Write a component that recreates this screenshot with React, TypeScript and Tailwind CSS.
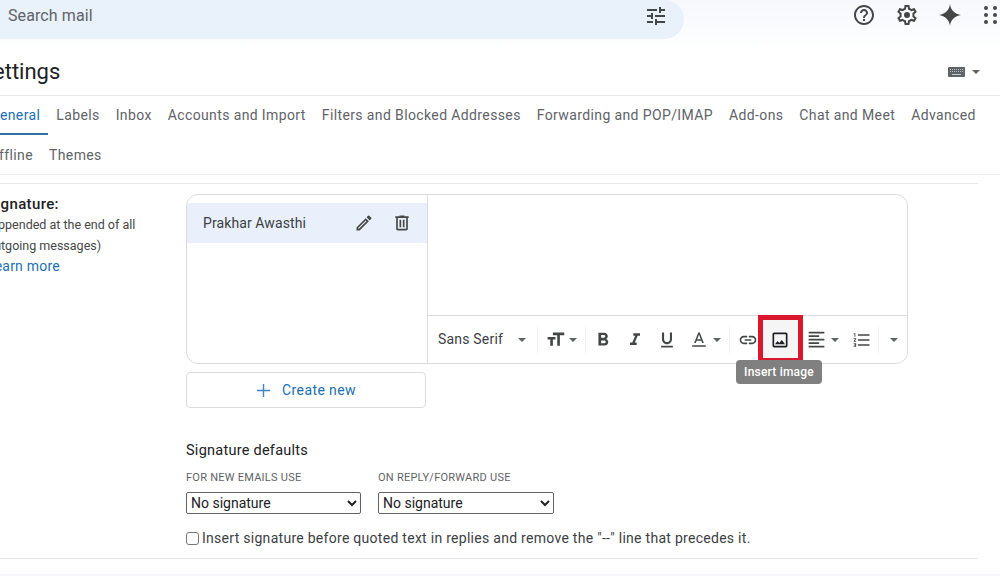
import React from "react";

const Icon = ({ d, size = 24, className = "" }: { d: string; size?: number; className?: string }) => (
  <svg viewBox="0 0 24 24" width={size} height={size} fill="currentColor" className={`shrink-0 ${className}`}>
    <path d={d} />
  </svg>
);

const paths = {
  tune: "M3 17v2h6v-2H3zM3 5v2h10V5H3zm10 16v-2h8v-2h-8v-2h-2v6h2zM7 9v2H3v2h4v2h2V9H7zm14 4v-2H11v2h10zm-6-4h2V7h4V5h-4V3h-2v6z",
  help: "M11 18h2v-2h-2v2zm1-16C6.48 2 2 6.48 2 12s4.48 10 10 10 10-4.48 10-10S17.52 2 12 2zm0 18c-4.41 0-8-3.59-8-8s3.59-8 8-8 8 3.59 8 8-3.59 8-8 8zm0-14c-2.21 0-4 1.79-4 4h2c0-1.1.9-2 2-2s2 .9 2 2c0 2-3 1.75-3 5h2c0-2.25 3-2.5 3-5 0-2.21-1.79-4-4-4z",
  settings:
    "M19.43 12.98c.04-.32.07-.64.07-.98 0-.34-.03-.66-.07-.98l2.11-1.65c.19-.15.24-.42.12-.64l-2-3.46c-.09-.16-.26-.25-.44-.25-.06 0-.12.01-.17.03l-2.49 1c-.52-.4-1.08-.73-1.69-.98l-.38-2.65C14.46 2.18 14.25 2 14 2h-4c-.25 0-.46.18-.49.42l-.38 2.65c-.61.25-1.17.59-1.69.98l-2.49-1c-.06-.02-.12-.03-.18-.03-.17 0-.34.09-.43.25l-2 3.46c-.13.22-.07.49.12.64l2.11 1.65c-.04.32-.07.65-.07.98 0 .33.03.66.07.98l-2.11 1.65c-.19.15-.24.42-.12.64l2 3.46c.09.16.26.25.44.25.06 0 .12-.01.17-.03l2.49-1c.52.4 1.08.73 1.69.98l.38 2.65c.03.24.24.42.49.42h4c.25 0 .46-.18.49-.42l.38-2.65c.61-.25 1.17-.59 1.69-.98l2.49 1c.06.02.12.03.18.03.17 0 .34-.09.43-.25l2-3.46c.12-.22.07-.49-.12-.64l-2.11-1.65zm-1.98-1.71c.04.31.05.52.05.73 0 .21-.02.43-.05.73l-.14 1.13.89.7 1.08.84-.7 1.21-1.27-.51-1.04-.42-.9.68c-.43.32-.84.56-1.25.73l-1.06.43-.16 1.13-.2 1.35h-1.4l-.19-1.35-.16-1.13-1.06-.43c-.43-.18-.83-.41-1.23-.71l-.91-.7-1.06.43-1.27.51-.7-1.21 1.08-.84.89-.7-.14-1.13c-.03-.31-.05-.54-.05-.74s.02-.43.05-.73l.14-1.13-.89-.7-1.08-.84.7-1.21 1.27.51 1.04.42.9-.68c.43-.32.84-.56 1.25-.73l1.06-.43.16-1.13.2-1.35h1.39l.19 1.35.16 1.13 1.06.43c.43.18.83.41 1.23.71l.91.7 1.06-.43 1.27-.51.7 1.21-1.07.85-.89.7.14 1.13zM12 9a3 3 0 1 0 0 6 3 3 0 0 0 0-6z",
  spark: "M12 1c.6 6 5 10.400 11 11-6 .6-10.400 5-11 11-.6-6-5-10.400-11-11 6-.6 10.400-5 11-11z",
  edit: "M3 17.25V21h3.75L17.81 9.94l-3.75-3.75L3 17.25zM5.920 19H5v-.92l9.060-9.060.92.92L5.920 19zM20.710 7.040a1 1 0 0 0 0-1.410l-2.340-2.340a1 1 0 0 0-1.410 0l-1.830 1.830 3.750 3.750 1.830-1.830z",
  trash: "M15 4V3H9v1H4v2h1v13c0 1.100.9 2 2 2h10c1.100 0 2-.9 2-2V6h1V4h-5zm2 15H7V6h10v13zM9 8h2v9H9zm4 0h2v9h-2z",
  size: "M9 4v3h5v12h3V7h5V4H9zm-6 8h3v7h3v-7h3V9H3v3z",
  bold: "M15.600 10.790c.97-.67 1.650-1.770 1.650-2.790 0-2.260-1.750-4-4-4H7v14h7.040c2.090 0 3.710-1.700 3.710-3.790 0-1.520-.86-2.820-2.150-3.420zM10 6.500h3c.83 0 1.500.67 1.500 1.500s-.67 1.500-1.500 1.500h-3v-3zm3.500 9H10v-3h3.500c.83 0 1.500.67 1.500 1.500s-.67 1.500-1.500 1.500z",
  italic: "M10 4v3h2.210l-3.420 8H6v3h8v-3h-2.210l3.420-8H18V4z",
  underline: "M12 17c3.310 0 6-2.690 6-6V3h-2.500v8c0 1.930-1.570 3.500-3.500 3.500S8.500 12.930 8.500 11V3H6v8c0 3.310 2.690 6 6 6zm-7 2v2h14v-2H5z",
  color: "M11 2L5.500 16h2.250l1.120-3h6.250l1.120 3h2.250L13 2h-2zM9.620 11L12 4.670 14.380 11H9.620zM3 19h18v2H3z",
  link: "M3.900 12c0-1.710 1.390-3.100 3.100-3.100h4V7H7c-2.760 0-5 2.240-5 5s2.240 5 5 5h4v-1.900H7c-1.710 0-3.100-1.390-3.100-3.100zM8 13h8v-2H8v2zm9-6h-4v1.900h4c1.710 0 3.100 1.390 3.100 3.100s-1.390 3.100-3.100 3.100h-4V17h4c2.760 0 5-2.240 5-5s-2.240-5-5-5z",
  image: "M19 5v14H5V5h14m0-2H5c-1.100 0-2 .9-2 2v14c0 1.100.9 2 2 2h14c1.100 0 2-.9 2-2V5c0-1.100-.9-2-2-2zm-4.860 8.860l-3 3.870L9 13.140 6 17h12l-3.860-5.140z",
  align: "M15 15H3v2h12v-2zm0-8H3v2h12V7zM3 13h18v-2H3v2zm0 8h18v-2H3v2zM3 3v2h18V3H3z",
  list: "M2 17h2v.5H3v1h1v.5H2v1h3v-4H2v1zm1-9h1V4H2v1h1v3zm-1 3h1.800L2 13.100v.9h3v-1H3.200L5 10.900V10H2v1zm5-6v2h14V5H7zm0 14h14v-2H7v2zm0-6h14v-2H7v2z",
};

const Caret = ({ className = "" }: { className?: string }) => (
  <span className={`h-0 w-0 shrink-0 border-x-[4.5px] border-t-[4.5px] border-x-transparent border-t-[#5f6368] ${className}`} />
);

const tabsTop = ["Labels", "Inbox", "Accounts and Import", "Filters and Blocked Addresses", "Forwarding and POP/IMAP", "Add-ons", "Chat and Meet", "Advanced"];

const Divider = ({ className = "" }: { className?: string }) => <span className={`h-[26px] w-px shrink-0 bg-[#f1f1f1] ${className}`} />;

const App: React.FC = () => {
  return (
    <div className="relative h-[576px] w-[1000px] overflow-hidden bg-white font-['Roboto',sans-serif] text-[#3c4043]">
      <header className="flex h-[52px] items-start justify-between bg-gradient-to-b from-[#f6f8fc] to-white">
        <div className="flex h-[39px] w-[684px] items-center justify-between rounded-r-[22px] bg-[#e9f1fb] pb-2 pl-2 pr-[16px]">
          <span className="text-[16px] tracking-[0.1px] text-[#5f6368]">Search mail</span>
          <Icon d={paths.tune} size={24} className="text-[#444746]" />
        </div>
        <div className="mr-[-8px] flex items-center gap-[19px] pt-[3px] text-[#444746]">
          <Icon d={paths.help} size={24} />
          <Icon d={paths.settings} size={24} />
          <Icon d={paths.spark} size={24} />
          <div className="ml-[3px] grid w-[24px] grid-cols-3 gap-x-[2px] gap-y-[3px]">
            {Array.from({ length: 9 }).map((_, i) => (
              <span key={i} className="h-[4px] w-[4px] rounded-full bg-[#444746]" />
            ))}
          </div>
        </div>
      </header>

      <div className="flex h-[44px] items-start justify-between border-b border-[#e8e8e8] pr-[20px]">
        <h1 className="ml-[-20px] pt-[3px] text-[22px] leading-[34px] text-[#202124]">Settings</h1>
        <div className="flex items-center gap-[7px] pt-[15px]">
          <svg viewBox="0 0 17 10" width="17" height="10">
            <rect width="17" height="10" rx="1" fill="#5f6368" />
            <path d="M2 2.500h13M2 4.500h13" stroke="#b9bcbf" strokeWidth="1" strokeDasharray="1 1" />
            <path d="M4 7.500h9" stroke="#c8cacc" strokeWidth="1" />
          </svg>
          <Caret />
        </div>
      </div>

      <nav className="h-[79px] border-b border-[#eeeeee] text-[14px] leading-[20px] tracking-[0.38px] text-[#5f6368]">
        <div className="flex h-[39px] gap-4">
          <span className="ml-[-10px] -mr-2 h-[39px] border-b-2 border-[#2f6fa5] pr-2 pt-[9px] text-[#1a6fb5]">General</span>
          {tabsTop.map((tab) => (
            <span key={tab} className="whitespace-nowrap pt-[9px]">
              {tab}
            </span>
          ))}
        </div>
        <div className="flex gap-4 pt-[10px]">
          <span className="ml-[-11px]">Offline</span>
          <span>Themes</span>
        </div>
      </nav>

      <section className="mr-[22px] mt-2 flex h-[376px] border-y border-[#e8e8e8] pt-[10px]">
        <div className="ml-[-13px] w-[199px] shrink-0 text-[12.500px] leading-[21px] text-[#444746]">
          <div className="text-[15px] font-medium leading-[20px] tracking-[0.35px] text-[#202124]">Signature:</div>
          <div>(appended at the end of all</div>
          <div>outgoing messages)</div>
          <div className="text-[14px] leading-[20px] tracking-[0.2px] text-[#1a6fb5]">Learn more</div>
        </div>

        <div className="w-[722px]">
          <div className="flex h-[170px] rounded-xl border border-[#dadce0]">
            <div className="w-[241px] border-r border-[#dadce0] pt-2">
              <div className="flex h-[40px] items-center justify-between bg-[#e9f0fb] pl-[16px] pr-[15px]">
                <span className="text-[14px] tracking-[0.1px] text-[#3c4043]">Prakhar Awasthi</span>
                <div className="flex items-center gap-[18px] text-[#444746]">
                  <Icon d={paths.edit} size={20} />
                  <Icon d={paths.trash} size={20} />
                </div>
              </div>
            </div>
            <div className="flex flex-1 flex-col justify-end">
              <div className="flex h-[48px] items-center border-t border-[#dadce0] pl-[10px] text-[#444746]">
                <span className="w-[67px] shrink-0 whitespace-nowrap text-[14px] tracking-[0.2px] text-[#3c4043]">Sans Serif</span>
                <Caret className="ml-[13px]" />
                <Divider className="ml-[11px]" />
                <Icon d={paths.size} size={21} className="ml-[7px]" />
                <Caret className="ml-[3px]" />
                <Divider className="ml-[8px]" />
                <Icon d={paths.bold} size={22} className="ml-[6px]" />
                <Icon d={paths.italic} size={20} className="ml-[11px]" />
                <Icon d={paths.underline} size={20} className="ml-[12px]" />
                <Icon d={paths.color} size={18} className="ml-[13px]" />
                <Caret className="ml-[5px]" />
                <Divider className="ml-[8px]" />
                <Icon d={paths.link} size={20} className="ml-[8px]" />
                <Icon d={paths.image} size={20} className="ml-[12px] text-[#202124]" />
                <Icon d={paths.align} size={21} className="ml-[16px]" />
                <Caret className="ml-[4px]" />
                <Icon d={paths.list} size={20} className="ml-[13px]" />
                <Divider className="ml-[6px]" />
                <Caret className="ml-[11px]" />
              </div>
            </div>
          </div>

          <button className="mt-[8px] flex h-[36px] w-[240px] items-center justify-center gap-[11px] rounded-[4px] border border-[#dadce0] text-[14px] tracking-[0.4px] text-[#1a6fb5]">
            <svg viewBox="0 0 16 16" width="15" height="15" className="text-[#4285c4]" fill="none" stroke="currentColor" strokeWidth="1.500">
              <path d="M8 1v14M1 8h14" />
            </svg>
            Create new
          </button>

          <h2 className="mt-[33px] text-[14.500px] leading-[20px] tracking-[0.25px] text-[#202124]">Signature defaults</h2>
          <div className="mt-[10px] flex gap-[17px]">
            <div className="w-[175px]">
              <div className="whitespace-nowrap text-[11px] leading-[14px] tracking-[0.25px] text-[#5f6368]">FOR NEW EMAILS USE</div>
              <select className="mt-[7px] h-[22px] w-full appearance-auto rounded-[2px] border border-[#5f6368] bg-white text-[14px] text-[#202124]">
                <option>No signature</option>
              </select>
            </div>
            <div className="w-[176px]">
              <div className="whitespace-nowrap text-[11px] leading-[14px] tracking-[0.25px] text-[#5f6368]">ON REPLY/FORWARD USE</div>
              <select className="mt-[7px] h-[22px] w-full appearance-auto rounded-[2px] border border-[#5f6368] bg-white text-[14px] text-[#202124]">
                <option>No signature</option>
              </select>
            </div>
          </div>
          <label className="mt-[13px] flex items-center gap-[3px] whitespace-nowrap text-[14px] tracking-[0.28px] text-[#3c4043]">
            <span className="h-[13px] w-[13px] rounded-[3px] border border-[#767676]" />
            Insert signature before quoted text in replies and remove the "--" line that precedes it.
          </label>
        </div>
      </section>

      <div className="flex pt-[11px] text-[14px] leading-[20px] text-[#202124]">
        <span className="ml-[-13px] w-[199px] shrink-0 font-medium">Personal level indicators:</span>
        <span>No indicators</span>
      </div>

      <div className="absolute bottom-0 left-0 right-0 h-[2px] bg-[#f6f8fc]" />

      {/* highlight and tooltip over the toolbar */}
      <div className="absolute left-[758px] top-[315px] h-[48px] w-[45px] border-[5px] border-[#d9182d] bg-black/[0.04]" />
      <div className="absolute left-[736px] top-[360px] flex h-[24px] w-[86px] items-center justify-center rounded-[4px] bg-[#808080] text-[12px] font-medium tracking-[0.2px] text-white">
        Insert image
      </div>
    </div>
  );
};

export default App;
